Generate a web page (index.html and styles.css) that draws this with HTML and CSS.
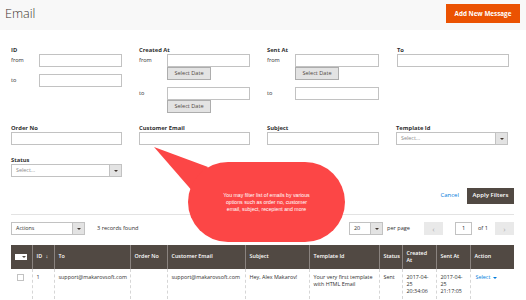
FILE: index.html
```html
<!DOCTYPE html>
<html>
<head>
<meta charset="utf-8">
<link rel="stylesheet" href="styles.css">
</head>
<body>
<div class="page-header">
  <h1 class="title">Email</h1>
  <button class="btn-primary">Add New Message</button>
</div>

<div class="filters">
  <div class="fgrid">
    <div class="field">
      <div class="flabel">ID</div>
      <div class="range">
        <div class="rrow"><span class="rl">from</span><span class="inp w83"></span></div>
        <div class="rrow"><span class="rl">to</span><span class="inp w83"></span></div>
      </div>
    </div>
    <div class="field">
      <div class="flabel">Created At</div>
      <div class="range">
        <div class="rrow"><span class="rl">from</span><span class="inp w83"></span></div>
        <div class="sd"><span class="btn-date">Select Date</span></div>
        <div class="rrow"><span class="rl">to</span><span class="inp w83"></span></div>
        <div class="sd"><span class="btn-date">Select Date</span></div>
      </div>
    </div>
    <div class="field">
      <div class="flabel">Sent At</div>
      <div class="range">
        <div class="rrow"><span class="rl">from</span><span class="inp w84"></span></div>
        <div class="sd"><span class="btn-date">Select Date</span></div>
        <div class="rrow"><span class="rl">to</span><span class="inp w84"></span></div>
      </div>
    </div>
    <div class="field shift">
      <div class="flabel">To</div>
      <span class="inp w112"></span>
    </div>

    <div class="field">
      <div class="flabel">Order No</div>
      <span class="inp w111"></span>
    </div>
    <div class="field">
      <div class="flabel">Customer Email</div>
      <span class="inp w111"></span>
    </div>
    <div class="field">
      <div class="flabel">Subject</div>
      <span class="inp w112"></span>
    </div>
    <div class="field">
      <div class="flabel">Template Id</div>
      <div class="sel w112"><span class="selt">Select...</span><span class="sela"><i class="caret"></i></span></div>
    </div>

    <div class="field">
      <div class="flabel">Status</div>
      <div class="sel w111"><span class="selt">Select...</span><span class="sela"><i class="caret"></i></span></div>
    </div>
  </div>

  <div class="factions">
    <span class="cancel">Cancel</span>
    <span class="btn-apply">Apply Filters</span>
  </div>
</div>

<div class="sep"></div>

<div class="toolbar">
  <div class="sel wact"><span class="selt">Actions</span><span class="sela"><i class="caret"></i></span></div>
  <span class="found">3 records found</span>
  <div class="pager">
    <div class="sel wpp"><span class="selt">20</span><span class="sela"><i class="caret"></i></span></div>
    <span class="pp">per page</span>
    <span class="pbtn">&#x2039;</span>
    <span class="pinp">1</span>
    <span class="of">of 1</span>
    <span class="pbtn">&#x203A;</span>
  </div>
</div>

<table class="grid">
  <colgroup>
    <col style="width:21px"><col style="width:22px"><col style="width:76px"><col style="width:37px"><col style="width:78px"><col style="width:64px"><col style="width:70px"><col style="width:23px"><col style="width:34px"><col style="width:34px"><col style="width:44px">
  </colgroup>
  <thead>
    <tr>
      <th class="cbh"><span class="mcb"><i class="mbox"></i><i class="caret wc"></i></span></th>
      <th>ID <span class="sort">&#x2193;</span></th>
      <th>To</th>
      <th>Order No</th>
      <th>Customer Email</th>
      <th>Subject</th>
      <th>Template Id</th>
      <th>Status</th>
      <th>Created At</th>
      <th>Sent At</th>
      <th>Action</th>
    </tr>
  </thead>
  <tbody>
    <tr>
      <td class="cbc"><span class="cb"></span></td>
      <td>1</td>
      <td>support@makarovsoft.com</td>
      <td></td>
      <td>support@makarovsoft.com</td>
      <td>Hey, Alex Makarov!</td>
      <td>Your very first template with HTML Email</td>
      <td>Sent</td>
      <td>2017-04-<br>25<br>20:34:06</td>
      <td>2017-04-<br>25<br>21:17:05</td>
      <td><span class="act">Select <i class="caret bc"></i></span></td>
    </tr>
  </tbody>
</table>

<div class="bubble">
  <svg class="tail" width="60" height="50" viewBox="0 0 60 50"><polygon points="0,0 54,20 40,46" fill="#fc4646"/></svg>
  <div class="bbody">You may filter list of emails by various<br>options such as order no, customer<br>email, subject, recepient and more</div>
</div>
</body>
</html>
```
FILE: styles.css
```css
* { box-sizing: border-box; }
html, body { margin: 0; padding: 0; }
body {
  width: 526px;
  height: 300px;
  overflow: hidden;
  background: #fff;
  font-family: "Open Sans", "Liberation Sans", sans-serif;
  font-size: 5.6px;
  line-height: 1.2;
  color: #303030;
  position: relative;
}
.page-header {
  height: 30px;
  background: #f8f8f8;
  display: flex;
  justify-content: space-between;
  align-items: flex-start;
  padding: 4px 6px 0 5px;
}
.title {
  margin: 0;
  font-weight: 300;
  font-size: 12.6px;
  line-height: 19px;
  color: #41362f;
}
.btn-primary {
  background: #eb5202;
  border: 1px solid #eb5202;
  color: #fff;
  font-family: "Open Sans", sans-serif;
  font-weight: 700;
  font-size: 6.3px;
  height: 19px;
  width: 74px;
  padding: 0;
}
.filters { padding: 16px 12px 0 11px; }
.fgrid {
  display: grid;
  grid-template-columns: 128px 128px 129px auto;
  row-gap: 11px;
}
.field.shift { padding-left: 1px; }
.flabel {
  font-size: 5.8px;
  font-weight: 700;
  line-height: 8px;
  height: 8px;
  color: #303030;
}
.range { display: flex; flex-direction: column; }
.rrow { display: flex; align-items: center; height: 13px; }
.rrow + .rrow, .sd + .rrow { margin-top: 7px; }
.rl { width: 28px; font-size: 5.6px; color: #303030; }
.inp {
  display: block;
  height: 13px;
  border: 1px solid #c2c2c2;
  background: #fff;
}
.w83 { width: 83px; }
.w84 { width: 84px; }
.w111 { width: 111px; }
.w112 { width: 112px; }
.sd { padding-left: 28px; display: flex; height: 13px; }
.btn-date {
  display: flex;
  align-items: center;
  justify-content: center;
  width: 44px;
  height: 13px;
  background: #e3e3e3;
  border: 1px solid #adadad;
  font-size: 5.6px;
  color: #514943;
}
.sel {
  display: flex;
  height: 13px;
  border: 1px solid #c2c2c2;
  background: #fff;
}
.selt {
  flex: 1;
  font-size: 5.4px;
  color: #8a8a8a;
  line-height: 11px;
  padding-left: 4px;
}
.sela {
  width: 12px;
  background: #e3e3e3;
  border-left: 1px solid #c2c2c2;
  display: flex;
  align-items: center;
  justify-content: center;
}
.caret {
  display: inline-block;
  width: 0; height: 0;
  border-left: 2px solid transparent;
  border-right: 2px solid transparent;
  border-top: 2.5px solid #41362f;
}
.factions {
  display: flex;
  justify-content: flex-end;
  align-items: center;
  gap: 8px;
  margin-top: 11px;
  height: 16px;
}
.cancel { font-size: 6px; color: #007bdb; }
.btn-apply {
  background: #514943;
  color: #fff;
  font-size: 6px;
  font-weight: 600;
  height: 16px;
  width: 47px;
  display: flex;
  align-items: center;
  justify-content: center;
}
.sep {
  margin: 10px 12px 0 11px;
  height: 1px;
  background: #e3e3e3;
}
.toolbar {
  display: flex;
  align-items: center;
  margin: 7px 12px 0 11px;
  height: 13px;
}
.wact { width: 74px; }
.wact .selt { color: #303030; }
.found { font-size: 5.6px; margin-left: 12px; }
.pager { margin-left: auto; display: flex; align-items: center; }
.wpp { width: 34px; }
.wpp .selt { color: #303030; }
.pp { font-size: 5.6px; margin-left: 4px; width: 37px; }
.pbtn {
  width: 19px; height: 13px;
  background: #e9e9e9;
  color: #adadad;
  font-size: 8px;
  display: flex; align-items: center; justify-content: center;
}
.pinp {
  width: 17px; height: 13px;
  border: 1px solid #c2c2c2;
  margin-left: 12px;
  font-size: 5.6px;
  display: flex; align-items: center; justify-content: center;
}
.of { font-size: 5.6px; margin-left: 6px; width: 17px; }
.grid {
  margin: 10px 12px 0 11px;
  width: 503px;
  border-collapse: collapse;
  table-layout: fixed;
  font-size: 5.4px;
}
.grid th {
  background: #514943;
  color: #fff;
  font-weight: 600;
  text-align: left;
  height: 24px;
  padding: 0 4px;
  line-height: 7.5px;
  border-left: 1px solid #8a837f;
  vertical-align: middle;
}
.grid th:first-child { border-left: none; }
.grid td {
  vertical-align: top;
  padding: 5px 4px 0 4px;
  line-height: 7px;
  height: 30px;
  border-left: 1px dashed #d6d6d6;
  color: #303030;
}
.grid td:first-child { border-left: none; }
.sort { font-weight: 400; margin-left: 2px; }
.cbh { padding: 0 !important; text-align: center !important; }
.mcb {
  display: inline-flex;
  align-items: center;
  background: #fff;
  height: 6px;
  width: 12px;
  padding-left: 1px;
  vertical-align: middle;
}
.mbox { display: inline-block; width: 5px; height: 4px; background:#fff; }
.caret.wc { border-top-color: #514943; margin-left: 1px; }
.cbc { padding-left: 6px !important; }
.cb {
  display: block;
  width: 7px; height: 7px;
  border: 1px solid #c2c2c2;
  background: #fff;
}
.act { color: #007bdb; margin-left: 1px; }
.caret.bc { border-top-color: #007bdb; margin-left: 1px; vertical-align: middle; }
.bubble {
  position: absolute;
  left: 188px;
  top: 162px;
  width: 157px;
  height: 80px;
}
.tail {
  position: absolute;
  left: -34px;
  top: -15px;
}
.bbody {
  position: absolute;
  inset: 0;
  background: #fc4646;
  border-radius: 40px;
  color: #fff;
  font-family: "Liberation Sans", Arial, sans-serif;
  font-size: 5.2px;
  line-height: 7px;
  text-align: center;
  display: flex;
  align-items: center;
  justify-content: center;
}
```
